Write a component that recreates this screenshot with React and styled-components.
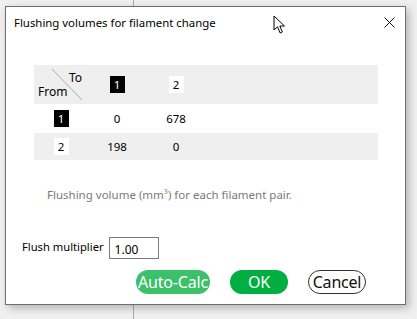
import styled, { createGlobalStyle } from "styled-components";

const Global = createGlobalStyle`
    html, body {
        margin: 0;
        padding: 0;
        width: 417px;
        height: 319px;
        overflow: hidden;
        background: #f0f0f0;
        font-family: "Noto Sans", "Open Sans", sans-serif;
    }
`;

const Desktop = styled.div`
    position: relative;
    width: 417px;
    height: 319px;
    padding: 6px 0 0 5px;
    box-sizing: border-box;
    background:
        linear-gradient(#a8a8a8, #a8a8a8) 133px 0 / 1px 100% no-repeat,
        #f0f0f0;
`;

const Dialog = styled.div`
    width: 401px;
    height: 299px;
    box-sizing: border-box;
    border: 1px solid #6e6e6e;
    background: #fff;
    display: flex;
    flex-direction: column;
    box-shadow: 3px 3px 8px rgba(0, 0, 0, 0.25);
`;

const TitleBar = styled.div`
    height: 31px;
    display: flex;
    align-items: center;
    justify-content: space-between;
    padding: 0 9px 0 8px;
    font-size: 11.4px;
    color: #000;
`;

const CloseButton = styled.span`
    display: grid;
    place-content: center;
    width: 14px;
    height: 14px;
`;

const Content = styled.div`
    padding: 27px 0 0 28px;
`;

const Table = styled.div`
    width: 344px;
    display: flex;
    flex-direction: column;
    font-size: 11.5px;
    color: #000;
`;

const Row = styled.div`
    display: grid;
    grid-template-columns: 54px 58px 60px 1fr;
    height: ${(p) => p.h}px;
    background: ${(p) => (p.shaded ? "#efefef" : "#fff")};
    align-items: center;
`;

const Cell = styled.div`
    display: flex;
    justify-content: center;
    align-items: center;
`;

const Corner = styled.div`
    position: relative;
    height: 100%;
`;

const CornerTo = styled.span`
    position: absolute;
    left: 35px;
    top: 4px;
    font-size: 12px;
`;

const CornerFrom = styled.span`
    position: absolute;
    left: 4px;
    top: 18px;
    font-size: 12px;
`;

const Diagonal = styled.svg`
    position: absolute;
    left: 18px;
    top: 4px;
`;

const Badge = styled.span`
    display: inline-flex;
    justify-content: center;
    align-items: center;
    width: 15px;
    height: 17px;
    background: ${(p) => (p.dark ? "#000" : "#fff")};
    color: ${(p) => (p.dark ? "#fff" : "#000")};
    font-size: 11.5px;
`;

const Note = styled.div`
    margin: 24px 0 0 13px;
    font-size: 11.5px;
    color: #7a7a7a;
    line-height: 16px;

    sup {
        font-size: 7px;
        vertical-align: 5px;
    }
`;

const FlushRow = styled.div`
    display: flex;
    align-items: center;
    gap: 5px;
    margin: 34px 0 0 16px;
    font-size: 11.2px;
`;

const FlushLabel = styled.span`
    margin-top: -3px;
`;

const FlushInput = styled.div`
    width: 50px;
    height: 22px;
    box-sizing: border-box;
    border: 1px solid #7a7a7a;
    padding: 3px 0 0 5px;
    font-size: 12px;
`;

const Buttons = styled.div`
    display: flex;
    gap: 20px;
    margin: 11px 0 0 130px;
`;

const Button = styled.button`
    height: 24px;
    width: ${(p) => p.w}px;
    border-radius: 12px;
    padding: 0;
    font-family: "Noto Sans", sans-serif;
    font-size: 16px;
    letter-spacing: -0.2px;
    line-height: 1;
    white-space: nowrap;
    border: ${(p) => (p.outline ? "1px solid #333" : "none")};
    background: ${(p) => p.bg || "#fff"};
    color: ${(p) => (p.outline ? "#111" : "#fff")};
`;

const Cursor = styled.svg`
    position: absolute;
    left: 273px;
    top: 15px;
`;

const rows = [
    { id: "1", dark: true, values: ["0", "678"], shaded: false, h: 29 },
    { id: "2", dark: false, values: ["198", "0"], shaded: true, h: 27 },
];

export default function App() {
    return (
        <>
            <Global />
            <Desktop>
                <Dialog>
                    <TitleBar>
                        <span>Flushing volumes for filament change</span>
                        <CloseButton>
                            <svg width="11" height="11" viewBox="0 0 11 11">
                                <path d="M0.5 0.5L10.5 10.5M10.5 0.5L0.5 10.5" stroke="#111" strokeWidth="1" />
                            </svg>
                        </CloseButton>
                    </TitleBar>
                    <Content>
                        <Table>
                            <Row h={39} shaded>
                                <Corner>
                                    <Diagonal width="32" height="32" viewBox="0 0 32 32">
                                        <path d="M0 0L30 31" stroke="#9a9a9a" strokeWidth="0.8" />
                                    </Diagonal>
                                    <CornerTo>To</CornerTo>
                                    <CornerFrom>From</CornerFrom>
                                </Corner>
                                <Cell><Badge dark>1</Badge></Cell>
                                <Cell><Badge>2</Badge></Cell>
                            </Row>
                            {rows.map((r) => (
                                <Row key={r.id} h={r.h} shaded={r.shaded}>
                                    <Cell><Badge dark={r.dark}>{r.id}</Badge></Cell>
                                    {r.values.map((v, i) => (
                                        <Cell key={i}>{v}</Cell>
                                    ))}
                                </Row>
                            ))}
                        </Table>
                        <Note>
                            Flushing volume (mm<sup>3</sup>) for each filament pair.
                        </Note>
                    </Content>
                    <FlushRow>
                        <FlushLabel>Flush multiplier</FlushLabel>
                        <FlushInput>1.00</FlushInput>
                    </FlushRow>
                    <Buttons>
                        <Button w={74} bg="#3cc06a">Auto-Calc</Button>
                        <Button w={58} bg="#00ae42">OK</Button>
                        <Button w={58} outline>Cancel</Button>
                    </Buttons>
                </Dialog>
                <Cursor width="14" height="20" viewBox="0 0 14 20">
                    <path
                        d="M1 1L1 15L4.5 11.8L7.2 18L9.4 17L6.8 11L11.5 11Z"
                        fill="#fff"
                        stroke="#000"
                        strokeWidth="1"
                        strokeLinejoin="round"
                    />
                </Cursor>
            </Desktop>
        </>
    );
}
